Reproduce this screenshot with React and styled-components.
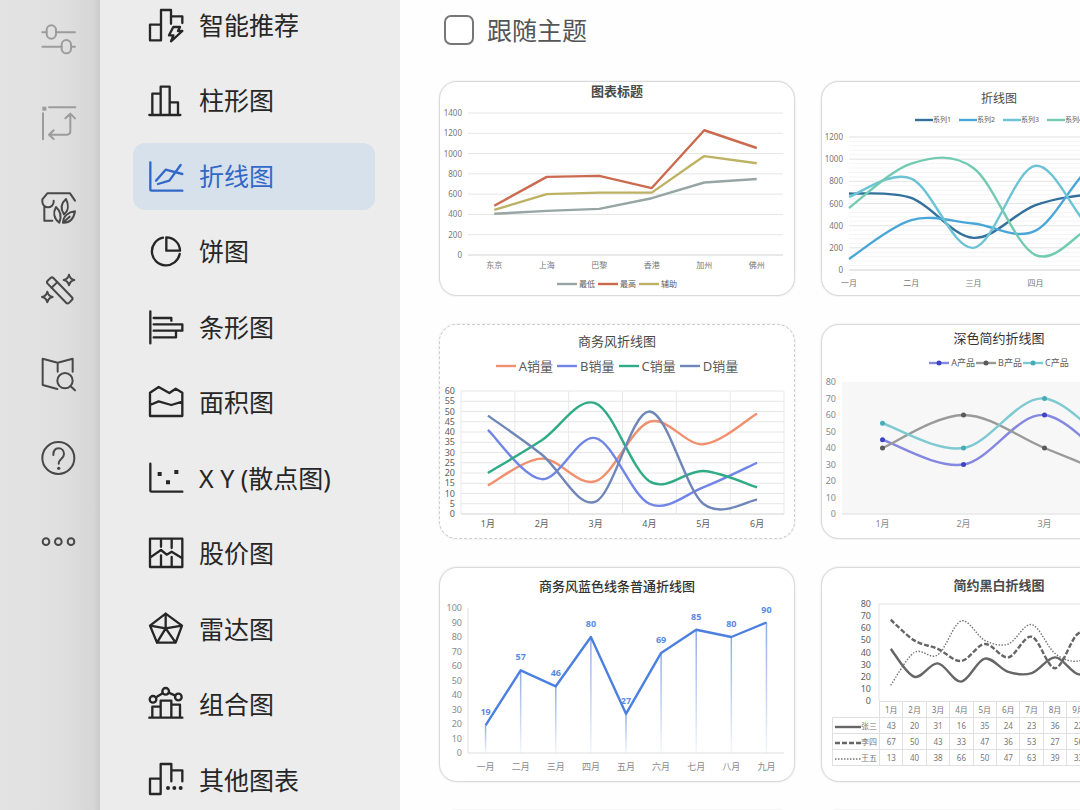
import React from 'react';
import styled, { createGlobalStyle } from 'styled-components';

const GlobalStyle = createGlobalStyle`
  * {
    box-sizing: border-box;
  }
  body {
    margin: 0;
    overflow: hidden;
    background: #fefefe;
    font-family: 'Noto Sans', 'Noto Sans CJK SC', sans-serif;
  }
`;

/* ---------- data ---------- */

const tools = [
  {
    name: '调整',
    muted: true,
    art: (
      <>
        <path d="M4 34H17M45 34H102M4 77H62M90 77H102" />
        <rect x="17" y="13" width="28" height="40" rx="14" />
        <rect x="62" y="57" width="28" height="40" rx="14" />
      </>
    ),
  },
  {
    name: '行列转换',
    muted: true,
    art: (
      <>
        <rect x="4" y="5" width="12" height="12" fill="currentColor" stroke="none" />
        <path d="M24 7H103M6 25V103M88 26V79q0 10-10 10H24M73 40L88 26l14 14M38 76L24 89l14 13" />
      </>
    ),
  },
  {
    name: '素材',
    art: (
      <>
        <path d="M102 35L87 13H19L4 31V38a16 16 0 0 0 34 0V35M10 53V95H34" />
        <path d="M45 54C36 70 38 88 55 101C62 84 58 66 45 54Z" />
        <path d="M75 30C59 44 58 60 69 76C82 66 84 48 75 30Z" />
        <path d="M102 67C82 69 66 82 66 101C86 102 98 89 102 67ZM67 100L86 83" />
      </>
    ),
  },
  {
    name: '美化',
    art: (
      <>
        <g transform="rotate(46 57 53)">
          <rect x="10" y="41" width="92" height="24" rx="6" />
          <path d="M33 41V65" />
        </g>
        <path d="M84 5Q87 18 100 21Q87 24 84 37Q81 24 68 21Q81 18 84 5Z" />
        <path d="M19 56Q22 69 35 72Q22 75 19 88Q16 75 3 72Q16 69 19 56Z" />
      </>
    ),
  },
  {
    name: '查找',
    art: (
      <>
        <path d="M49 96L5 84V5L50 17L95 5V44M50 17V44M88 87L102 100" />
        <circle cx="72" cy="71" r="23" />
      </>
    ),
  },
  {
    name: '帮助',
    art: (
      <>
        <circle cx="52" cy="51" r="48" />
        <path d="M37 42C37 28 44 22 53 22S69 29 69 39C69 53 53 53 53 68" />
        <circle cx="53" cy="82" r="5" fill="currentColor" stroke="none" />
      </>
    ),
  },
  {
    name: '更多',
    art: (
      <>
        <circle cx="15" cy="50" r="10" />
        <circle cx="52" cy="50" r="10" />
        <circle cx="90" cy="50" r="10" />
      </>
    ),
  },
];

const chartTypes = [
  {
    name: '智能推荐',
    art: (
      <>
        <path d="M36 94H3V47H36M36 94V3H66V44M66 22H100V42" />
        <path d="M73 54H93L87 66H100L66 97L73 79H60Z" />
      </>
    ),
  },
  { name: '柱形图', art: <path d="M1 93H94M10 93V29H35M35 93V8H62V93M62 55H87V93" /> },
  {
    name: '折线图',
    active: true,
    art: <path d="M4 7V88q0 4 4 4H100M21 62L50 29L100 42M27 72L61 62L95 15" />,
  },
  { name: '饼图', art: <path d="M42 8A42 42 0 1 0 92 57M52 7V47H93A41 41 0 0 0 52 7Z" /> },
  { name: '条形图', art: <path d="M4 1V97M14 21H67V29M14 40H100V59H14M81 59V79H14" /> },
  {
    name: '面积图',
    art: <path d="M3 20L29 3L61 21L80 8L100 20V90H3ZM3 57L29 46L67 57L100 47" />,
  },
  {
    name: 'X Y (散点图)',
    art: (
      <>
        <path d="M4 5V85q0 4 4 4H100" />
        <path fill="currentColor" stroke="none" d="M26 30h12v12H26zM76 24h12v12H76zM51 55h12v12H51z" />
      </>
    ),
  },
  {
    name: '股价图',
    art: <path d="M3 5H100V90H3ZM3 62L36 39L53 53L68 44L100 64M36 5V29M36 55V89M68 5V33M68 60V89" />,
  },
  {
    name: '雷达图',
    art: <path d="M50 2L99 38L80 89H24L3 38ZM50 2V46M99 38L50 46L3 38M80 89L50 46L24 89" />,
  },
  {
    name: '组合图',
    art: (
      <>
        <circle cx="12" cy="34" r="10" />
        <circle cx="50" cy="10" r="10" />
        <circle cx="88" cy="27" r="10" />
        <path d="M21 28L41 16M59 14L79 23M1 89H100M10 89V56H35M35 89V38H67V89M67 50H93V89" />
      </>
    ),
  },
  {
    name: '其他图表',
    art: (
      <>
        <path d="M35 90H3V44H35M35 90V0H67V52M67 19H100V52" />
        <g fill="currentColor" stroke="none">
          <circle cx="57" cy="72" r="6" />
          <circle cx="76" cy="72" r="6" />
          <circle cx="95" cy="72" r="6" />
        </g>
      </>
    ),
  },
];

const months = ['1月', '2月', '3月', '4月', '5月', '6月', '7月', '8月', '9月', '10月', '11月', '12月'];
const cnMonths = ['一月', '二月', '三月', '四月', '五月', '六月', '七月', '八月', '九月'];

const cityChart = {
  height: 176,
  box: { l: 28, r: 343, t: 13, b: 155 },
  max: 1400,
  step: 200,
  labels: ['东京', '上海', '巴黎', '香港', '加州', '佛州'],
  labelY: 168,
  fontSize: 8,
  series: [
    { name: '最低', color: '#97a5a5', data: [406, 435, 455, 560, 715, 750] },
    { name: '最高', color: '#cc6a50', data: [485, 770, 780, 660, 1230, 1055] },
    { name: '辅助', color: '#bdb263', data: [445, 600, 615, 615, 975, 905] },
  ],
};

const smoothChart = {
  height: 165,
  box: { l: 27, r: 338, t: 9, b: 142 },
  max: 1200,
  step: 200,
  minor: 40,
  edge: true,
  smooth: true,
  labels: cnMonths.slice(0, 6),
  labelY: 158,
  fontSize: 8,
  series: [
    { name: '系列1', color: '#33709c', data: [690, 650, 290, 585, 690, 700] },
    { name: '系列2', color: '#4aa6d8', data: [100, 450, 420, 355, 970, 800] },
    { name: '系列3', color: '#6cc3d5', data: [660, 825, 200, 940, 330, 500] },
    { name: '系列4', color: '#72cbb0', data: [560, 960, 920, 135, 430, 600] },
  ],
};

const salesChart = {
  height: 161,
  box: { l: 21, r: 344, t: 17, b: 140 },
  max: 60,
  step: 5,
  columns: true,
  smooth: true,
  labels: months.slice(0, 6),
  labelY: 153,
  fontSize: 9,
  ink: '#606060',
  series: [
    { name: 'A销量', color: '#f0906f', data: [14, 27, 16, 45, 34, 49] },
    { name: 'B销量', color: '#7085e6', data: [41, 17, 37, 5, 13, 25] },
    { name: 'C销量', color: '#2fab86', data: [20, 36, 54, 16, 21, 13] },
    { name: 'D销量', color: '#6f86b8', data: [48, 29, 6, 50, 5, 7] },
  ],
};

const productChart = {
  height: 160,
  box: { l: 20, r: 344, t: 11, b: 143 },
  max: 80,
  step: 10,
  fill: '#f7f7f7',
  smooth: true,
  labels: months.slice(0, 4),
  labelY: 156,
  fontSize: 9,
  ink: '#8a8a8a',
  series: [
    { name: 'A产品', color: '#8488e0', dot: '#3f43c4', data: [45, 30, 60, 20] },
    { name: 'B产品', color: '#9a9a9a', dot: '#5a5a5a', data: [40, 60, 40, 20] },
    { name: 'C产品', color: '#7fcad2', dot: '#46abb6', data: [55, 40, 70, 30] },
  ],
};

const blueChart = {
  height: 181,
  box: { l: 28, r: 344, t: 13, b: 158 },
  max: 100,
  step: 10,
  noGrid: true,
  axis: true,
  drops: true,
  values: true,
  labels: cnMonths,
  labelY: 175,
  fontSize: 9,
  ink: '#8a8a8a',
  series: [{ name: '销量', color: '#4c80e0', data: [19, 57, 46, 80, 27, 69, 85, 80, 90] }],
};

const monoChart = {
  height: 107,
  box: { l: 57, r: 339, t: 10, b: 107 },
  max: 80,
  step: 10,
  noGrid: true,
  frame: true,
  smooth: true,
  labels: months,
  labelGap: 8,
  fontSize: 9,
  ink: '#606060',
  series: [
    { name: '张三', color: '#666', data: [43, 20, 31, 16, 35, 24, 23, 36, 22, 30, 41, 28] },
    { name: '李四', color: '#666', dash: '5 2', data: [67, 50, 43, 33, 47, 36, 53, 27, 56, 48, 39, 44] },
    { name: '王五', color: '#777', dash: '1.5 1.5', width: 1.4, data: [13, 40, 38, 66, 50, 47, 63, 39, 33, 45, 52, 37] },
  ],
};

/* ---------- charts ---------- */

function linePath(pts, smooth) {
  return pts
    .map(([x, y], i) => {
      if (i === 0) return `M${x} ${y}`;
      if (!smooth) return `L${x} ${y}`;
      const p0 = pts[i - 2] || pts[i - 1];
      const p1 = pts[i - 1];
      const p3 = pts[i + 1] || pts[i];
      const c1 = [p1[0] + (x - p0[0]) / 6, p1[1] + (y - p0[1]) / 6];
      const c2 = [x - (p3[0] - p1[0]) / 6, y - (p3[1] - p1[1]) / 6];
      return `C${c1} ${c2} ${x} ${y}`;
    })
    .join('');
}

function range(max, step) {
  const list = [];
  for (let v = 0; v <= max; v += step) list.push(v);
  return list;
}

function Plot({ chart }) {
  const { box, max, step, labels, series, fontSize, labelGap = 6, ink = '#777' } = chart;
  const { l, r, t, b } = box;
  const slot = (r - l) / (chart.edge ? labels.length - 1 : labels.length);
  const px = (i) => l + slot * (chart.edge ? i : i + 0.5);
  const py = (v) => b - ((b - t) * v) / max;

  return (
    <PlotSvg viewBox={`0 0 354 ${chart.height}`}>
      <defs>
        <linearGradient id="drop" x1="0" y1="0" x2="0" y2="1">
          <stop offset="0" stopColor="#8fabe6" />
          <stop offset="1" stopColor="#8fabe6" stopOpacity="0.1" />
        </linearGradient>
      </defs>
      {chart.fill && <rect x={l} y={t} width={r - l} height={b - t} fill={chart.fill} />}
      {chart.frame && <path d={`M${l} ${b}V${t}H${r}V${b}`} fill="none" stroke="#e2e2e2" />}
      {chart.minor &&
        range(max, chart.minor).map((v) => <path key={v} d={`M${l} ${py(v)}H${r}`} stroke="#f5f5f5" />)}
      {!chart.noGrid && !chart.fill &&
        range(max, step).map((v) => <path key={v} d={`M${l} ${py(v)}H${r}`} stroke="#e6e6e6" />)}
      {chart.columns &&
        range(labels.length, 1).map((i) => (
          <path key={i} d={`M${l + slot * i} ${t}V${b}`} stroke="#e9e9e9" />
        ))}
      {chart.axis && <path d={`M${l} ${t}V${b}`} stroke="#dedede" />}
      {!chart.frame && <path d={`M${l} ${b}H${r}`} stroke="#dedede" />}
      {range(max, step).map((v) => (
        <text key={v} x={l - labelGap} y={py(v) + 3} fontSize={fontSize} fill={ink} textAnchor="end">
          {v}
        </text>
      ))}
      {chart.labelY &&
        labels.map((name, i) => (
          <text key={name} x={px(i)} y={chart.labelY} fontSize={fontSize} fill={ink} textAnchor="middle">
            {name}
          </text>
        ))}
      {chart.drops &&
        series[0].data.map((v, i) => (
          <rect key={i} x={px(i) - 0.75} y={py(v)} width="1.5" height={b - py(v)} fill="url(#drop)" />
        ))}
      {series.map((s) => (
        <path
          key={s.name}
          d={linePath(s.data.map((v, i) => [px(i), py(v)]), chart.smooth)}
          fill="none"
          stroke={s.color}
          strokeWidth={s.width || 2.4}
          strokeDasharray={s.dash}
          strokeLinejoin="round"
        />
      ))}
      {series
        .filter((s) => s.dot)
        .map((s) => s.data.map((v, i) => <circle key={s.name + i} cx={px(i)} cy={py(v)} r="2.5" fill={s.dot} />))}
      {chart.values &&
        series[0].data.map((v, i) => (
          <text key={i} x={px(i)} y={py(v) - 10} fontSize="9" fontWeight="700" fill="#5b8ae4" textAnchor="middle">
            {v}
          </text>
        ))}
    </PlotSvg>
  );
}

function Legend({ chart, ...look }) {
  return (
    <LegendRow {...look}>
      {chart.series.map((s) => (
        <LegendItem key={s.name} $gap={look.$inner}>
          <Swatch viewBox="0 0 20 6" preserveAspectRatio="none" $width={look.$line}>
            <path d="M0 3H20" stroke={s.color} strokeWidth="2.4" />
            {s.dot && <circle cx="10" cy="3" r="2.5" fill={s.dot} />}
          </Swatch>
          {s.name}
        </LegendItem>
      ))}
    </LegendRow>
  );
}

function DataTable({ chart }) {
  return (
    <Sheet>
      <thead>
        <tr>
          <Corner />
          {chart.labels.map((m) => (
            <th key={m} scope="col">{m}</th>
          ))}
        </tr>
      </thead>
      <tbody>
        {chart.series.map((s) => (
          <tr key={s.name}>
            <RowHead scope="row">
              <KeyLine viewBox="0 0 26 6">
                <path d="M0 3H26" stroke={s.color} strokeWidth={s.width || 2.4} strokeDasharray={s.dash} />
              </KeyLine>
              {s.name}
            </RowHead>
            {s.data.map((v, i) => (
              <td key={i}>{v}</td>
            ))}
          </tr>
        ))}
      </tbody>
    </Sheet>
  );
}

/* ---------- page ---------- */

function App() {
  return (
    <Shell>
      <GlobalStyle />
      <Toolbar>
        {tools.map((tool) => (
          <ToolButton key={tool.name} type="button" aria-label={tool.name} $muted={tool.muted}>
            <ToolIcon viewBox="0 0 108 108">{tool.art}</ToolIcon>
          </ToolButton>
        ))}
      </Toolbar>
      <Menu>
        {chartTypes.map((type) => (
          <MenuItem key={type.name} type="button" $active={type.active}>
            <MenuIcon viewBox="0 0 102 102">{type.art}</MenuIcon>
            <MenuLabel>{type.name}</MenuLabel>
          </MenuItem>
        ))}
      </Menu>
      <Gallery>
        <FollowTheme>
          <Checkbox type="checkbox" />
          跟随主题
        </FollowTheme>
        <Cards>
          <Card>
            <Title $top={0} $weight={600}>图表标题</Title>
            <Plot chart={cityChart} />
            <Legend chart={cityChart} $size={8} $inner={2} $gap={3} />
          </Card>
          <Card>
            <Title $top={8} $size={12}>折线图</Title>
            <Legend chart={smoothChart} $top={4} $size={7} $line={18} $gap={8} />
            <Plot chart={smoothChart} />
          </Card>
          <Card $dashed>
            <Title $top={7}>商务风折线图</Title>
            <Legend chart={salesChart} $top={8} $size={13} $inner={3} $gap={4} />
            <Plot chart={salesChart} />
          </Card>
          <Card>
            <Title $top={4} $color="#333">深色简约折线图</Title>
            <Legend chart={productChart} $top={8} $size={9} $inner={2} $gap={1} />
            <Plot chart={productChart} />
          </Card>
          <Card>
            <Title $top={9} $weight={500} $color="#333">商务风蓝色线条普通折线图</Title>
            <Plot chart={blueChart} />
          </Card>
          <Card>
            <Title $top={8} $weight={600}>简约黑白折线图</Title>
            <Plot chart={monoChart} />
            <DataTable chart={monoChart} />
          </Card>
          <Card />
          <Card />
        </Cards>
      </Gallery>
    </Shell>
  );
}
export default App;

const Shell = styled.div`
  display: flex;
  height: 100vh;
  overflow: hidden;
`;

const Toolbar = styled.nav`
  display: flex;
  flex-direction: column;
  align-items: center;
  flex: 0 0 100px;
  padding: 0 0 0 18px;
  margin-top: -3px;
  background: linear-gradient(90deg, #e3e3e3 0%, #e0e0e0 60%, #d6d6d6 94%, #cacaca 100%);
`;

const ToolButton = styled.button`
  display: flex;
  align-items: center;
  justify-content: center;
  flex: 0 0 84px;
  width: 60px;
  padding: 0;
  border: 0;
  background: none;
  color: ${(p) => (p.$muted ? '#9c9c9c' : '#484848')};
`;

const Icon = styled.svg`
  flex: none;
  overflow: visible;
  fill: none;
  stroke: currentColor;
  stroke-linecap: round;
  stroke-linejoin: round;
`;

const ToolIcon = styled(Icon)`
  width: 36px;
  height: 36px;
  stroke-width: 6;
`;

const Menu = styled.nav`
  display: flex;
  flex-direction: column;
  justify-content: space-between;
  flex: 0 0 300px;
  margin: -8px 0 -4px;
  padding: 0 25px 0 33px;
  background: #ececec;
`;

const MenuItem = styled.button`
  display: flex;
  align-items: center;
  gap: 16px;
  flex: 0 0 67px;
  padding: 0 16px;
  border: 0;
  border-radius: 12px;
  background: ${(p) => (p.$active ? '#d7e1ec' : 'transparent')};
  color: ${(p) => (p.$active ? '#3268c8' : '#262626')};
  font-family: inherit;
  font-size: 25px;
  line-height: 36px;
  white-space: nowrap;
`;

const MenuIcon = styled(Icon)`
  width: 34px;
  height: 34px;
  stroke-width: 7;
`;

const MenuLabel = styled.span`
  padding-bottom: 2px;
`;

const Gallery = styled.main`
  flex: 1;
  min-width: 0;
  padding: 12px 0 0 39px;
  overflow: hidden;
`;

const FollowTheme = styled.label`
  display: flex;
  align-items: center;
  gap: 13px;
  height: 36px;
  padding-left: 5px;
  color: #555;
  font-size: 25px;
  line-height: 36px;
`;

const Checkbox = styled.input`
  appearance: none;
  width: 30px;
  height: 30px;
  margin: 0;
  border: 2px solid #777;
  border-radius: 7px;
  background: #fff;
`;

const Cards = styled.div`
  display: grid;
  grid-template-columns: repeat(2, 356px);
  grid-auto-rows: minmax(215px, auto);
  gap: 28px 26px;
  margin-top: 33px;
`;

const Card = styled.figure`
  display: flex;
  flex-direction: column;
  margin: 0;
  border: 1px ${(p) => (p.$dashed ? 'dashed #cfcfcf' : 'solid #dadada')};
  border-radius: 18px;
  background: #fff;
  box-shadow: 0 0 2px #dcdcdc;
`;

const Title = styled.figcaption`
  padding-top: ${(p) => p.$top}px;
  color: ${(p) => p.$color || '#4a4a4a'};
  font-size: ${(p) => p.$size || 13}px;
  font-weight: ${(p) => p.$weight || 400};
  line-height: 18px;
  text-align: center;
`;

const PlotSvg = styled.svg`
  display: block;
  width: 100%;
  overflow: visible;
`;

const LegendRow = styled.div`
  display: flex;
  justify-content: center;
  gap: ${(p) => p.$gap}px;
  margin-top: ${(p) => p.$top || 0}px;
  color: #5c5c5c;
  font-size: ${(p) => p.$size}px;
  line-height: 16px;
`;

const LegendItem = styled.span`
  display: flex;
  align-items: center;
  gap: ${(p) => p.$gap || 0}px;
`;

const Swatch = styled.svg`
  width: ${(p) => p.$width || 20}px;
  height: 6px;
`;

const Sheet = styled.table`
  width: 329px;
  margin-left: 10px;
  border-collapse: collapse;
  table-layout: fixed;
  color: #777;
  font-size: 8px;
  line-height: 15px;
  text-align: center;

  th,
  td {
    height: 16px;
    padding: 0;
    border: 1px solid #e0e0e0;
    font-weight: 400;
  }
`;

const Corner = styled.td`
  && {
    width: 47px;
    border-top: 0;
    border-left: 0;
  }
`;

const RowHead = styled.th`
  white-space: nowrap;
`;

const KeyLine = styled.svg`
  width: 26px;
  height: 6px;
  vertical-align: middle;
`;
